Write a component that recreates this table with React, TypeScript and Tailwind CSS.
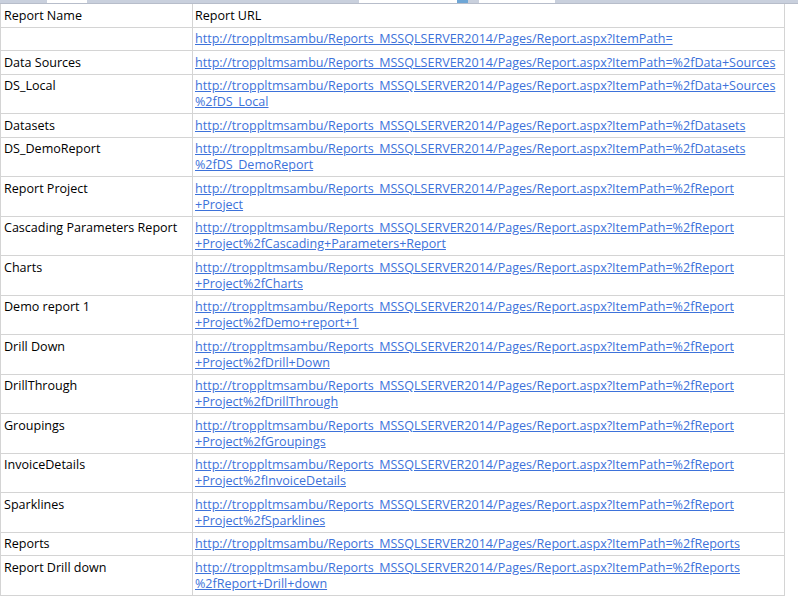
const rows: { name: string; url: string[] }[] = [
  { name: '', url: ['http://troppltmsambu/Reports_MSSQLSERVER2014/Pages/Report.aspx?ItemPath='] },
  { name: 'Data Sources', url: ['http://troppltmsambu/Reports_MSSQLSERVER2014/Pages/Report.aspx?ItemPath=%2fData+Sources'] },
  { name: 'DS_Local', url: ['http://troppltmsambu/Reports_MSSQLSERVER2014/Pages/Report.aspx?ItemPath=%2fData+Sources', '%2fDS_Local'] },
  { name: 'Datasets', url: ['http://troppltmsambu/Reports_MSSQLSERVER2014/Pages/Report.aspx?ItemPath=%2fDatasets'] },
  { name: 'DS_DemoReport', url: ['http://troppltmsambu/Reports_MSSQLSERVER2014/Pages/Report.aspx?ItemPath=%2fDatasets', '%2fDS_DemoReport'] },
  { name: 'Report Project', url: ['http://troppltmsambu/Reports_MSSQLSERVER2014/Pages/Report.aspx?ItemPath=%2fReport', '+Project'] },
  { name: 'Cascading Parameters Report', url: ['http://troppltmsambu/Reports_MSSQLSERVER2014/Pages/Report.aspx?ItemPath=%2fReport', '+Project%2fCascading+Parameters+Report'] },
  { name: 'Charts', url: ['http://troppltmsambu/Reports_MSSQLSERVER2014/Pages/Report.aspx?ItemPath=%2fReport', '+Project%2fCharts'] },
  { name: 'Demo report 1', url: ['http://troppltmsambu/Reports_MSSQLSERVER2014/Pages/Report.aspx?ItemPath=%2fReport', '+Project%2fDemo+report+1'] },
  { name: 'Drill Down', url: ['http://troppltmsambu/Reports_MSSQLSERVER2014/Pages/Report.aspx?ItemPath=%2fReport', '+Project%2fDrill+Down'] },
  { name: 'DrillThrough', url: ['http://troppltmsambu/Reports_MSSQLSERVER2014/Pages/Report.aspx?ItemPath=%2fReport', '+Project%2fDrillThrough'] },
  { name: 'Groupings', url: ['http://troppltmsambu/Reports_MSSQLSERVER2014/Pages/Report.aspx?ItemPath=%2fReport', '+Project%2fGroupings'] },
  { name: 'InvoiceDetails', url: ['http://troppltmsambu/Reports_MSSQLSERVER2014/Pages/Report.aspx?ItemPath=%2fReport', '+Project%2fInvoiceDetails'] },
  { name: 'Sparklines', url: ['http://troppltmsambu/Reports_MSSQLSERVER2014/Pages/Report.aspx?ItemPath=%2fReport', '+Project%2fSparklines'] },
  { name: 'Reports', url: ['http://troppltmsambu/Reports_MSSQLSERVER2014/Pages/Report.aspx?ItemPath=%2fReports'] },
  { name: 'Report Drill down', url: ['http://troppltmsambu/Reports_MSSQLSERVER2014/Pages/Report.aspx?ItemPath=%2fReports', '%2fReport+Drill+down'] },
]

function TabStrip() {
  return (
    <div className="flex h-[4px] border-b border-[#b7bdca]">
      <div className="w-[47px] bg-[#c9d0dd]" />
      <div className="w-[40px] bg-white" />
      <div className="w-[272px] bg-[#c9d0dd]" />
      <div className="w-[98px] bg-white" />
      <div className="w-[11px] bg-[#6ea6d6]" />
      <div className="w-[11px] bg-[#c9d0dd]" />
      <div className="w-[76px] bg-white" />
      <div className="flex-1 bg-[#c9d0dd]" />
    </div>
  )
}

const cell = 'border border-[#d4d4d4] pt-[3.5px] pb-[3px] align-top whitespace-nowrap'

export default function App() {
  return (
    <div className="h-[596px] w-[798px] overflow-hidden bg-white font-['Open_Sans',sans-serif] text-[12.55px] leading-[16px] text-black">
      <TabStrip />
      <table className="w-[785px] border-collapse">
        <tbody>
          <tr>
            <td className={`w-[192px] border-t-0 px-[3px] ${cell}`}>Report Name</td>
            <td className={`border-t-0 px-[2px] ${cell}`}>Report URL</td>
          </tr>
          {rows.map((r, i) => (
            <tr key={i}>
              <td className={`px-[3px] ${cell}`}>{r.name}</td>
              <td className={`px-[2px] ${cell}`}>
                <a href="#" className="block text-[#3d72da] underline">
                  {r.url.map((line, j) => (
                    <span key={j} className="block">
                      {line}
                    </span>
                  ))}
                </a>
              </td>
            </tr>
          ))}
        </tbody>
      </table>
    </div>
  )
}
